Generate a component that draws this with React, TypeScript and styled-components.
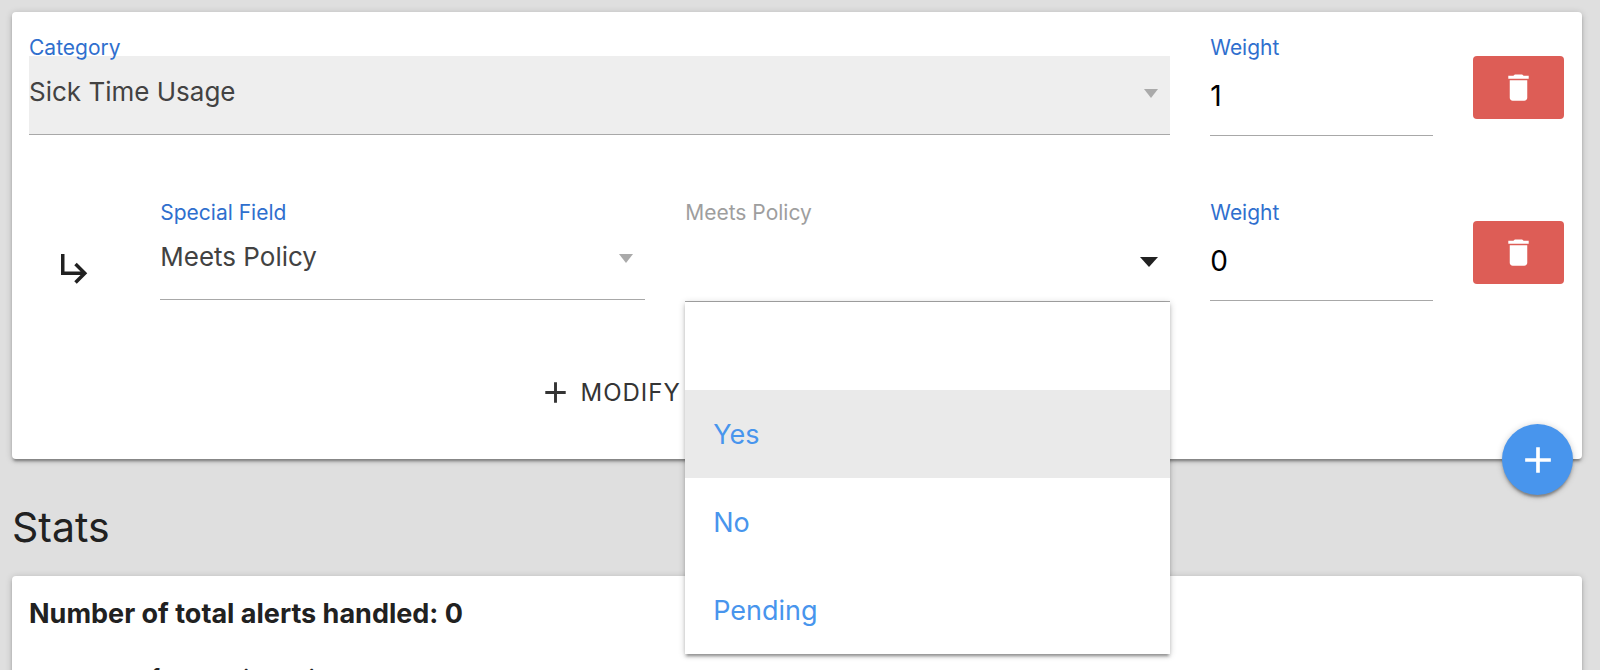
import React, { useState } from "react";
import styled, { createGlobalStyle } from "styled-components";
import { MdAdd, MdDelete, MdSubdirectoryArrowRight } from "react-icons/md";

const GlobalStyle = createGlobalStyle`
  *, *::before, *::after { box-sizing: border-box; }
  body {
    margin: 0;
    background: #dfdfdf;
    color: #212121;
    font-family: Inter, "Liberation Sans", sans-serif;
    font-size: 26px;
  }
  button, input, select { font-family: inherit; }
`;

const Page = styled.main`
  height: 100vh;
  padding: 12px 18px 0 12px;
  overflow-y: auto;
  scrollbar-width: none;
`;

const Card = styled.section`
  position: relative;
  padding: 24px 18px 42px 17px;
  background: #fff;
  border-radius: 4px;
  box-shadow:
    0 3px 3px rgba(0, 0, 0, 0.16),
    0 4px 2px -2px rgba(0, 0, 0, 0.2),
    0 1px 7px rgba(0, 0, 0, 0.2);
`;

const StatsCard = styled(Card)`
  padding-top: 20px;
`;

const Row = styled.div`
  display: grid;
  grid-template-columns: repeat(12, minmax(0, 1fr));
  column-gap: 40px;
  align-items: start;
  margin-bottom: 65px;
`;

const Field = styled.div<{ $span: number }>`
  position: relative;
  grid-column: span ${(p) => p.$span};
`;

const Label = styled.label<{ $muted?: boolean }>`
  display: block;
  position: relative;
  z-index: 1;
  margin-bottom: -4px;
  font-size: 21px;
  line-height: 24px;
  white-space: nowrap;
  color: ${(p) => (p.$muted ? "#9e9e9e" : "#2f6fce")};
`;

const SelectBox = styled.div<{ $filled?: boolean; $open?: boolean }>`
  position: relative;
  height: ${(p) => (p.$open ? 81 : 79)}px;
  border-bottom: 1px solid #a8a8a8;
  background: ${(p) => (p.$filled ? "#eeeeee" : "transparent")};
`;

const Select = styled.select`
  display: block;
  width: 100%;
  height: 70px;
  padding: 0 40px 0 0;
  border: 0;
  outline: 0;
  appearance: none;
  background: transparent;
  color: #424242;
  font-size: 26px;
  opacity: 1;
`;

const Caret = styled.svg<{ $open?: boolean }>`
  position: absolute;
  top: ${(p) => (p.$open ? 36 : 33)}px;
  right: 12px;
  width: ${(p) => (p.$open ? 18 : 14)}px;
  height: ${(p) => (p.$open ? 10 : 9)}px;
  fill: ${(p) => (p.$open ? "#212121" : "#aaaaaa")};
  pointer-events: none;
`;

const NumberInput = styled.input`
  display: block;
  width: 100%;
  height: 80px;
  padding: 0;
  border: 0;
  border-bottom: 1px solid #a8a8a8;
  outline: 0;
  background: transparent;
  color: #000;
  font-size: 28px;
`;

const DeleteButton = styled.button`
  display: flex;
  align-items: center;
  justify-content: center;
  height: 63px;
  margin-top: 20px;
  padding: 0;
  border: 0;
  border-radius: 4px;
  background: #dd5d56;
  color: #fff;
  font-size: 35px;
  cursor: pointer;
`;

const NestedMark = styled.div`
  display: flex;
  justify-content: center;
  padding-top: 46px;
  font-size: 42px;
`;

const Menu = styled.ul`
  position: absolute;
  z-index: 2;
  top: 100%;
  left: 0;
  right: 0;
  margin: 0;
  padding: 0;
  list-style: none;
  background: #fff;
  box-shadow:
    0 3px 3px rgba(0, 0, 0, 0.16),
    0 4px 2px -2px rgba(0, 0, 0, 0.2),
    0 1px 7px rgba(0, 0, 0, 0.2);
`;

const MenuItem = styled.li<{ $active: boolean }>`
  height: 88px;
  padding: 2px 28px 0;
  background: ${(p) => (p.$active ? "#eaeaea" : "transparent")};
  color: #4895ed;
  font-size: 27px;
  line-height: 86px;
  cursor: pointer;
`;

const Actions = styled.div`
  display: flex;
  justify-content: center;
`;

const ModifyButton = styled.button`
  display: flex;
  align-items: center;
  gap: 8px;
  width: 518px;
  height: 50px;
  padding: 0;
  border: 0;
  background: transparent;
  color: #343434;
  font-size: 24px;
  letter-spacing: 1px;
  cursor: pointer;

  svg { font-size: 35px; }
`;

const AddButton = styled.button`
  display: flex;
  align-items: center;
  justify-content: center;
  position: absolute;
  right: 9px;
  bottom: -36px;
  width: 71px;
  height: 71px;
  padding: 0;
  border: 0;
  border-radius: 50%;
  background: #4895ed;
  color: #fff;
  font-size: 44px;
  box-shadow:
    0 3px 3px rgba(0, 0, 0, 0.16),
    0 4px 2px -2px rgba(0, 0, 0, 0.2),
    0 1px 7px rgba(0, 0, 0, 0.2);
  cursor: pointer;
`;

const Heading = styled.h1`
  margin: 40px 0 20px;
  font-size: 41px;
  font-weight: 400;
  line-height: 57px;
`;

const Stat = styled.p<{ $strong?: boolean }>`
  margin: 0 0 30px;
  font-size: ${(p) => (p.$strong ? 27 : 26)}px;
  font-weight: ${(p) => (p.$strong ? 700 : 400)};
  line-height: 36px;
`;

const DownCaret = ({ open }: { open?: boolean }) => (
  <Caret $open={open} viewBox="0 0 14 9" preserveAspectRatio="none" aria-hidden="true">
    <path d="M0 0h14L7 9z" />
  </Caret>
);

const WeightField = ({ id, value }: { id: string; value: string }) => (
  <Field $span={2}>
    <Label htmlFor={id}>Weight</Label>
    <NumberInput id={id} type="text" inputMode="numeric" defaultValue={value} />
  </Field>
);

const choices = ["", "Yes", "No", "Pending"];

export default function App() {
  const [active, setActive] = useState("Yes");

  return (
    <>
      <GlobalStyle />
      <Page>
        <Card>
          <Row>
            <Field $span={9}>
              <Label htmlFor="category">Category</Label>
              <SelectBox $filled>
                <Select id="category" disabled>
                  <option>Sick Time Usage</option>
                </Select>
                <DownCaret />
              </SelectBox>
            </Field>
            <WeightField id="category-weight" value="1" />
            <DeleteButton type="button" aria-label="Delete category">
              <MdDelete />
            </DeleteButton>
          </Row>

          <Row>
            <NestedMark>
              <MdSubdirectoryArrowRight />
            </NestedMark>
            <Field $span={4}>
              <Label htmlFor="special-field">Special Field</Label>
              <SelectBox>
                <Select id="special-field" disabled>
                  <option>Meets Policy</option>
                </Select>
                <DownCaret />
              </SelectBox>
            </Field>
            <Field $span={4}>
              <Label htmlFor="meets-policy" $muted>
                Meets Policy
              </Label>
              <SelectBox $open>
                <Select id="meets-policy">
                  {choices.map((choice) => (
                    <option key={choice}>{choice}</option>
                  ))}
                </Select>
                <DownCaret open />
              </SelectBox>
              <Menu role="listbox" aria-label="Meets Policy">
                {choices.map((choice) => (
                  <MenuItem
                    key={choice}
                    role="option"
                    aria-selected={choice === active}
                    $active={choice === active}
                    onMouseEnter={() => setActive(choice)}
                  >
                    {choice}
                  </MenuItem>
                ))}
              </Menu>
            </Field>
            <WeightField id="field-weight" value="0" />
            <DeleteButton type="button" aria-label="Delete special field">
              <MdDelete />
            </DeleteButton>
          </Row>

          <Actions>
            <ModifyButton type="button">
              <MdAdd />
              MODIFY
            </ModifyButton>
          </Actions>
          <AddButton type="button" aria-label="Add category">
            <MdAdd />
          </AddButton>
        </Card>

        <Heading>Stats</Heading>
        <StatsCard>
          <Stat $strong>Number of total alerts handled: 0</Stat>
          <Stat>Number of alerts in which you’ve passed: 0</Stat>
        </StatsCard>
      </Page>
    </>
  );
}
